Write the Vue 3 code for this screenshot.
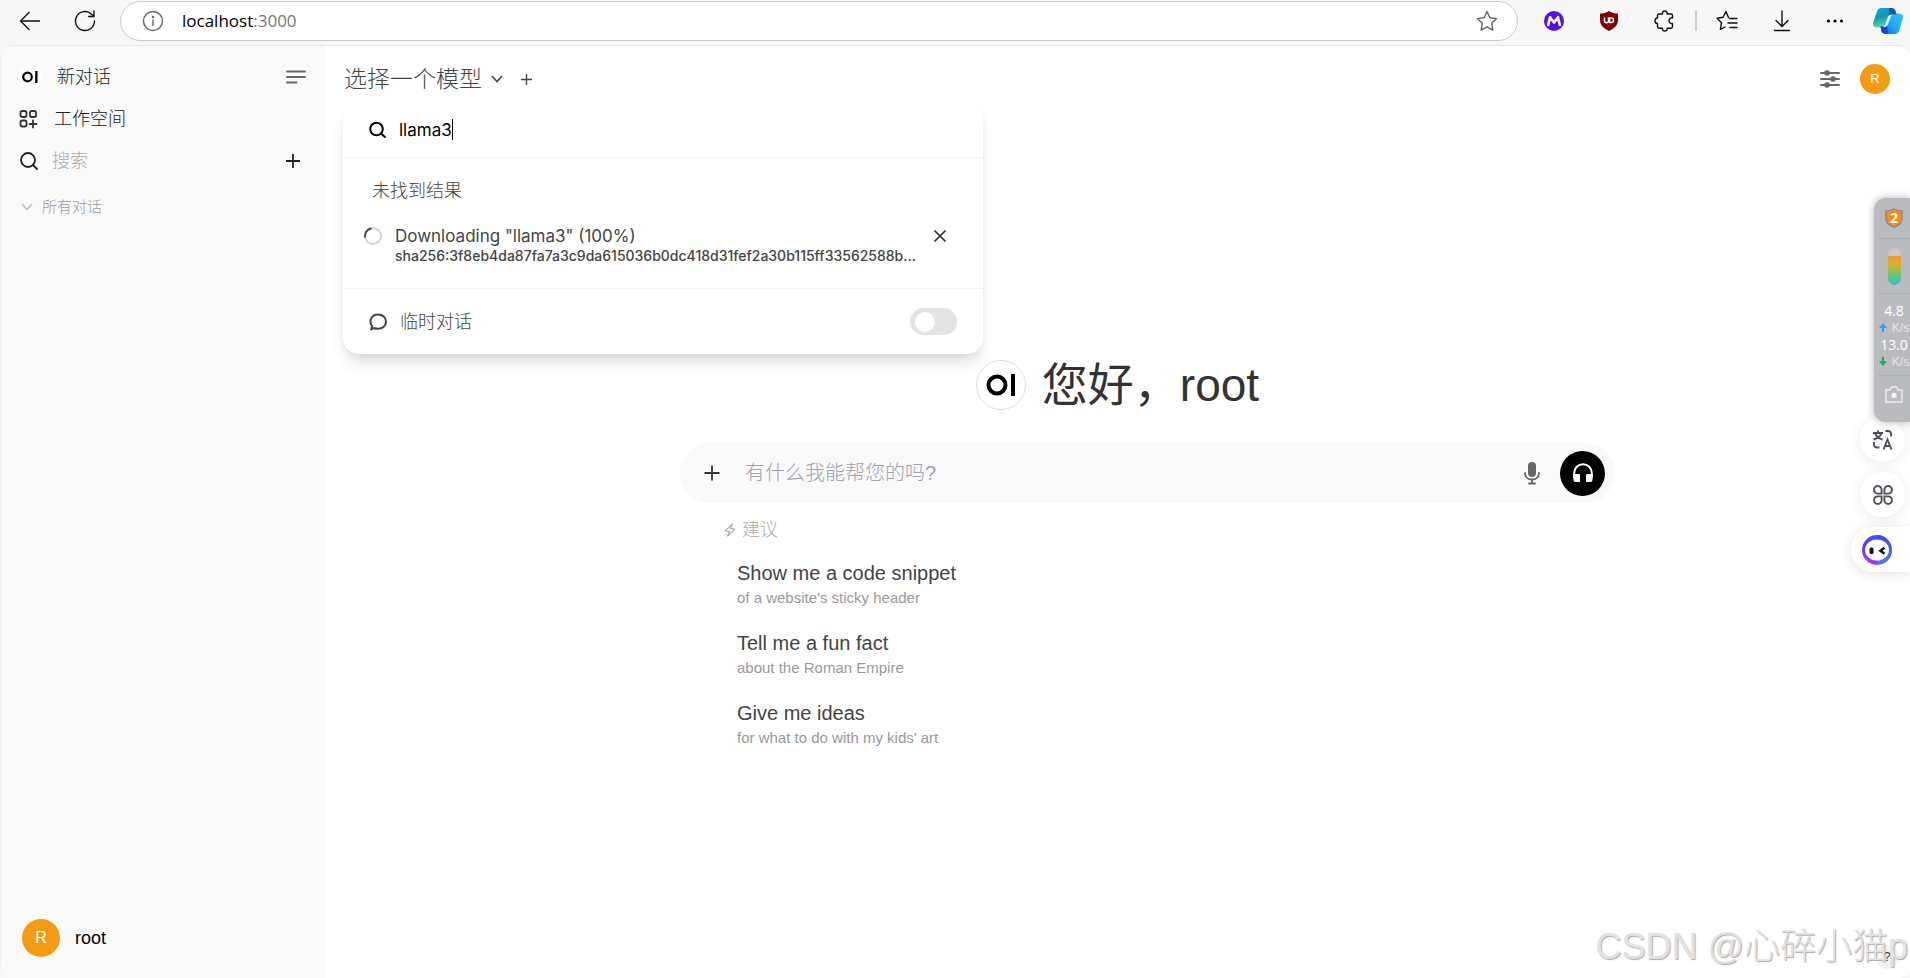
<script setup>
import { ref } from 'vue'

const query = ref('llama3')
const temporary = ref(false)
const message = ref('')
const suggestions = [
  { title: 'Show me a code snippet', detail: "of a website's sticky header" },
  { title: 'Tell me a fun fact', detail: 'about the Roman Empire' },
  { title: 'Give me ideas', detail: "for what to do with my kids' art" },
]
</script>

<template>
  <div class="window">
    <header class="browser">
      <button class="tool" aria-label="Back">
        <svg width="22" height="20" viewBox="0 0 22 20" class="line black"><path d="M20.500 10H1.500M10 1.500 1.500 10l8.500 8.500" /></svg>
      </button>
      <button class="tool reload" aria-label="Reload">
        <svg width="22" height="22" viewBox="0 0 22 22" class="line black"><path d="M20.500 11A9.500 9.500 0 1 1 17.300 3.900L19.500 6M20 1v5.500h-5.500" /></svg>
      </button>
      <div class="address">
        <svg width="22" height="22" viewBox="0 0 22 22" class="line gray"><circle cx="11" cy="11" r="9.500" /><path d="M11 10v5.500" /><circle cx="11" cy="7" r=".6" /></svg>
        <span class="url">localhost<span class="port">:3000</span></span>
        <button class="tool star" aria-label="Favorite">
          <svg width="22" height="22" viewBox="0 0 22 22" class="line gray"><path d="m11 1.500 2.900 6.200 6.700.9-4.900 4.700 1.200 6.800L11 16.900l-5.900 3.200 1.200-6.800L1.400 8.600l6.700-.9z" /></svg>
        </button>
      </div>
      <div class="extensions">
        <button class="tool" aria-label="M extension">
          <svg width="20" height="20" viewBox="0 0 20 20"><circle cx="10" cy="10" r="10" fill="#5410e8" /><path d="M4.200 14 6 6.200l4 5.300 4-5.300 1.800 7.800" fill="none" stroke="#fff" stroke-width="2.600" stroke-linejoin="round" stroke-linecap="round" /></svg>
        </button>
        <button class="tool" aria-label="uBlock">
          <svg width="20" height="20" viewBox="0 0 20 20"><path d="M10 0c3 2 6 2.500 9 2.500V9c0 5.500-4 8.500-9 11-5-2.500-9-5.500-9-11V2.500C4 2.500 7 2 10 0z" fill="#800000" /><path d="M5.500 6.500v3.200a1.700 1.700 0 0 0 4 0V6.500M10.700 11.500h1.500a2.300 2.300 0 0 0 0-4.600h-1.500z" fill="none" stroke="#fff" stroke-width="1.400" /></svg>
        </button>
        <button class="tool" aria-label="Extensions">
          <svg width="22" height="22" viewBox="0 0 22 22" class="line black"><path d="M5 4h3.500c-.3-2 .8-3 2.300-3S13.500 2 13.200 4H17q1.500 0 1.500 1.500V8c-2-.5-3.500.8-3.500 2.700s1.500 3.300 3.500 2.800v3q0 1.700-1.500 1.700h-3.800c.3 2-.8 2.800-2.400 2.800s-2.600-.8-2.300-2.800H5q-1.500 0-1.500-1.700v-3C1.700 13.500 1 12.300 1 10.800S1.700 8 3.500 8V5.500Q3.500 4 5 4z" /></svg>
        </button>
        <i class="separator"></i>
        <button class="tool" aria-label="Favorites list">
          <svg width="22" height="22" viewBox="0 0 22 22" class="line black"><path d="M12.500 7.500 10 1.500 7 7.300l-5.900.9 4.400 4.500-1.100 6.700L9 17M13.500 8.500H21M12 13h9M14 17.500h7" /></svg>
        </button>
        <button class="tool" aria-label="Downloads">
          <svg width="18" height="22" viewBox="0 0 18 22" class="line black"><path d="M9 1v15M3 10.500 9 16.500l6-6M1.500 20.500h15" /></svg>
        </button>
        <button class="tool" aria-label="More">
          <svg width="18" height="6" viewBox="0 0 18 6"><circle cx="2.500" cy="3" r="1.600" /><circle cx="9" cy="3" r="1.600" /><circle cx="15.500" cy="3" r="1.600" /></svg>
        </button>
        <button class="tool copilot" aria-label="Copilot">
          <svg width="30" height="26" viewBox="0 0 32 28">
            <defs>
              <linearGradient id="cpA" x1="0" y1="0" x2=".3" y2="1"><stop offset="0" stop-color="#0aa8d8" /><stop offset=".5" stop-color="#1596b8" /><stop offset="1" stop-color="#5be08f" /></linearGradient>
              <linearGradient id="cpB" x1="1" y1="0" x2="0" y2="1"><stop offset="0" stop-color="#38c4f4" /><stop offset=".6" stop-color="#14a4fb" /><stop offset="1" stop-color="#1652d8" /></linearGradient>
            </defs>
            <path d="M9 0h11q3 0 4 3l1 4h-5q-3 0-4 3l-3 8q-1 3-4 3H4q-5 0-4-5L4 4q1-4 5-4z" fill="url(#cpA)" />
            <path d="M23 28H13q-3 0-4-3l-1-5h4q3 0 4-3l3-8q1-3 4-3h5q5 0 4 5l-4 13q-1 4-5 4z" fill="url(#cpB)" />
            <path d="M17 0h3q3 0 4 3l1 4h-5q-2 0-3 1z" fill="#1554b8" /><path d="M8 20h4q2 0 3-1l1 9h-3q-3 0-4-3z" fill="#1844cf" />
            <path d="M20 7q-3 0-4 3l-3 8q-1 2-2 2.700Q15 21 16 17l3-8q1-3 4-3z" fill="#f4fbff" />
          </svg>
        </button>
      </div>
    </header>

    <div class="page">
      <aside class="sidebar">
        <nav>
          <div class="row">
            <button class="entry new">
              <span class="mini-logo"><svg width="16" height="12" viewBox="0 0 16 12"><circle cx="5.500" cy="6" r="4.300" fill="none" stroke="#000" stroke-width="2.200" /><path d="M13.200 0h2.300v12h-2.300z" /></svg></span>新对话
            </button>
            <button class="icon-button menu" aria-label="收起侧边栏">
              <svg width="20" height="14" viewBox="0 0 20 14"><path d="M1 1.500h18M1 7h18M1 12.500h9.500" stroke="#666" stroke-width="1.800" stroke-linecap="round" /></svg>
            </button>
          </div>
          <div class="row">
            <a class="entry" href="#workspace">
              <svg width="20" height="20" viewBox="0 0 20 20" fill="none" stroke="#333" stroke-width="1.800" stroke-linecap="round"><rect x="1.500" y="2" width="6" height="6" rx="1.700" /><rect x="11" y="2" width="6" height="6" rx="1.700" /><rect x="1.500" y="11.500" width="6" height="6" rx="1.700" /><path d="M14 11.500v7M10.500 15h7" /></svg>工作空间
            </a>
          </div>
          <div class="row">
            <label class="entry find">
              <svg width="20" height="20" viewBox="0 0 20 20" fill="none" stroke="#222" stroke-width="1.800" stroke-linecap="round"><circle cx="9" cy="9" r="7" /><path d="m14.500 14.500 3.500 3.500" /></svg>
              <input type="text" placeholder="搜索" aria-label="搜索" />
            </label>
            <button class="icon-button add" aria-label="新建">
              <svg width="14" height="14" viewBox="0 0 14 14"><path d="M7 0v14M0 7h14" stroke="#222" stroke-width="1.800" /></svg>
            </button>
          </div>
        </nav>
        <button class="folder">
          <svg width="12" height="8" viewBox="0 0 12 8" fill="none" stroke="#bbb" stroke-width="1.500"><path d="m1 1 5 5.500L11 1" /></svg>所有对话
        </button>
        <button class="account"><span class="avatar large">R</span>root</button>
      </aside>

      <main class="main">
        <header class="topbar">
          <div class="model">
            <button class="model-name">选择一个模型
              <svg width="12" height="8" viewBox="0 0 12 8" fill="none" stroke="#444" stroke-width="1.600"><path d="m1 1 5 5.500L11 1" /></svg>
            </button>
            <button class="icon-button" aria-label="添加模型">
              <svg width="11" height="11" viewBox="0 0 11 11"><path d="M5.500 0v11M0 5.500h11" stroke="#444" stroke-width="1.400" /></svg>
            </button>
            <section class="dropdown">
              <label class="search">
                <svg width="18" height="18" viewBox="0 0 18 18" fill="none" stroke="#000" stroke-width="2"><circle cx="7.500" cy="8" r="6.300" /><path d="m12 12.500 4.500 4" /></svg>
                <input v-model="query" type="text" aria-label="搜索模型" /><i class="caret"></i>
              </label>
              <div class="results">
                <p class="none">未找到结果</p>
                <div class="download">
                  <svg class="spinner" width="18" height="18" viewBox="0 0 18 18" fill="none" stroke-width="2"><circle cx="9" cy="9" r="8" stroke="#d4d4d4" /><path d="M1.200 10.500A8 8 0 0 1 7.500 1.200" stroke="#444" /></svg>
                  <div class="status"><p>Downloading "{{ query }}" (100%)</p><small>sha256:3f8eb4da87fa7a3c9da615036b0dc418d31fef2a30b115ff33562588b...</small></div>
                  <button class="icon-button cancel" aria-label="取消">
                    <svg width="12" height="12" viewBox="0 0 12 12"><path d="m.5.5 11 11m0-11-11 11" stroke="#333" stroke-width="1.600" /></svg>
                  </button>
                </div>
              </div>
              <label class="temporary">
                <svg width="18" height="18" viewBox="0 0 18 18" fill="none" stroke="#444" stroke-width="2" stroke-linejoin="round"><path d="M2.300 16.500 3 13C-1 7 3.500 1.500 9 1.500c4.800 0 8 3.200 8 7.200s-3.300 7.100-8 7.100c-1.500 0-3-.3-4-.8z" /></svg>
                <span>临时对话</span>
                <input v-model="temporary" type="checkbox" class="switch" />
              </label>
            </section>
          </div>
          <div class="actions">
            <button class="icon-button" aria-label="设置">
              <svg width="20" height="18" viewBox="0 0 20 18" stroke="#666" stroke-width="2" stroke-linecap="round" fill="#666"><path d="M1 3h18M1 9h18M1 15h18" /><g stroke="none"><circle cx="7" cy="3" r="2.800" /><circle cx="13" cy="9" r="2.800" /><circle cx="7" cy="15" r="2.800" /></g></svg>
            </button>
            <button class="avatar">R</button>
          </div>
        </header>

        <div class="content">
          <h1>
            <span class="logo"><svg width="30" height="22" viewBox="0 0 30 22"><circle cx="11" cy="11" r="8.500" fill="none" stroke="#000" stroke-width="4" /><path d="M25 0h4v22h-4z" /></svg></span>您好，root
          </h1>
          <form class="prompt" @submit.prevent>
            <button type="button" class="icon-button" aria-label="更多">
              <svg width="16" height="16" viewBox="0 0 16 16"><path d="M8 .5v15M.5 8h15" stroke="#333" stroke-width="1.800" /></svg>
            </button>
            <input v-model="message" type="text" placeholder="有什么我能帮您的吗?" aria-label="消息" />
            <button type="button" class="icon-button" aria-label="语音输入">
              <svg width="16" height="24" viewBox="0 0 16 24" fill="none" stroke="#666" stroke-width="1.800" stroke-linecap="round"><rect x="4" y="1" width="8" height="15" rx="4" fill="#666" stroke="none" /><path d="M1 12c0 4 3 6.500 7 6.500s7-2.500 7-6.500M8 18.500v3.500M5 22.500h6" /></svg>
            </button>
            <button type="button" class="call" aria-label="通话">
              <svg width="20" height="20" viewBox="0 0 20 20"><path d="M1.200 15V10a8.800 8.800 0 0 1 17.600 0v5" fill="none" stroke="#fff" stroke-width="2" /><path d="M.5 11H6q1 0 1 1v7H2.500q-2 0-2-2zM19.500 11H14q-1 0-1 1v7h4.500q2 0 2-2z" fill="#fff" /></svg>
            </button>
          </form>
          <section class="suggestions">
            <h2><svg width="12" height="14" viewBox="0 0 12 14" fill="none" stroke="#aaa" stroke-width="1.100" stroke-linejoin="round"><path d="M8.500 1 1 7.800l4.500.8L3.500 13 11 6.200l-4.500-.8z" /></svg>建议</h2>
            <button v-for="item in suggestions" :key="item.title" class="suggestion"><b>{{ item.title }}</b><span>{{ item.detail }}</span></button>
          </section>
        </div>
      </main>
    </div>

    <div class="floating">
      <button class="bubble" aria-label="翻译">
        <svg width="20" height="20" viewBox="0 0 20 20" fill="none" stroke="#50505a" stroke-width="1.900"><path d="M0 3h10M5 .5V3M2 3c1 3.500 4 5.500 7.500 6.500M8.500 3C7.500 6.500 4 8.500.5 9.500M12.500 1H15q3 0 3 3v2.500M1 12v2.500q0 3 3 3h2.500M10.500 19.500l4-10 4 10M12 16h5" /></svg>
      </button>
      <button class="bubble" aria-label="应用">
        <svg width="20" height="20" viewBox="0 0 20 20" fill="none" stroke="#50505a" stroke-width="1.900"><path d="M8.600 8.600H5A3.800 3.800 0 1 1 8.600 5zM11.400 8.600H15A3.800 3.800 0 1 0 11.400 5zM8.600 11.400H5A3.800 3.800 0 1 0 8.600 15zM11.400 11.400H15A3.800 3.800 0 1 1 11.400 15z" /></svg>
      </button>
      <button class="assistant" aria-label="助手">
        <svg width="30" height="30" viewBox="0 0 30 30"><defs><linearGradient id="bot" x1=".2" y1="1" x2=".8" y2="0"><stop offset="0" stop-color="#c23af0" /><stop offset=".4" stop-color="#5a38f5" /><stop offset="1" stop-color="#3b62ff" /></linearGradient><linearGradient id="botRight" x1="0" y1="0" x2="0" y2="1"><stop offset="0" stop-color="#4932ee" /><stop offset="1" stop-color="#3aa5ff" /></linearGradient></defs><circle cx="15" cy="15" r="15" fill="url(#bot)" /><path d="M15 0a15 15 0 0 1 0 30z" fill="url(#botRight)" opacity=".65" /><ellipse cx="15" cy="15" rx="12" ry="10.500" fill="#fff" /><rect x="7.500" y="12.500" width="4" height="6.500" rx="1.500" fill="#15151d" /><path d="m22.500 12.700-4 3 4 3" fill="none" stroke="#15151d" stroke-width="2.600" /></svg>
      </button>
    </div>

    <aside class="monitor">
      <div class="cell shield"><svg width="18" height="20" viewBox="0 0 18 20"><path d="M9 .7c2.500 1.700 5 2.300 8.200 2.300v7.500c0 4.500-3.500 7-8.200 8.800C4.300 17.500.8 15 .8 10.500V3C4 3 6.500 2.400 9 .7z" fill="#ff8c10" stroke="#7b83a8" stroke-width="1.200" /></svg><b>2</b></div>
      <div class="cell gauge"><i></i></div>
      <div class="cell speeds">
        <span>4.8</span><small><svg width="8" height="9" viewBox="0 0 8 9"><path d="m4 0 4 5H5v4H3V5H0z" fill="#17a8ff" /></svg>K/s</small>
        <span>13.0</span><small><svg width="8" height="9" viewBox="0 0 8 9"><path d="m4 9 4-5H5V0H3v4H0z" fill="#0bb75b" /></svg>K/s</small>
      </div>
      <div class="cell camera"><svg width="18" height="17" viewBox="0 0 18 17" fill="none" stroke="#eee" stroke-width="1.300"><path d="M1 4h4l1.500-3h5L13 4h4v12H1z" /><circle cx="9" cy="9.500" r="2" fill="#fff" /></svg></div>
    </aside>

    <button class="help">?</button>
    <div class="watermark">CSDN @心碎小猫p</div>
  </div>
</template>

<style>
body {
  margin: 0;
  background: #f7f7f7;
}
</style>

<style scoped>
* {
  box-sizing: border-box;
}
.window {
  position: relative;
  display: flex;
  flex-direction: column;
  min-height: 100vh;
  overflow: hidden;
  background: #f7f7f7;
  color: #333;
  font-family: "Liberation Sans", "Noto Sans CJK SC", sans-serif;
  font-size: 18px;
  line-height: 24px;
}
button,
input {
  border: 0;
  padding: 0;
  background: none;
  color: inherit;
  font: inherit;
  outline: none;
}
button {
  cursor: pointer;
}
p,
h1,
h2 {
  margin: 0;
  font-weight: 400;
}
svg {
  display: block;
  flex: none;
}
.line {
  fill: none;
  stroke-width: 1.4;
  stroke-linecap: round;
  stroke-linejoin: round;
}
.black {
  stroke: #111;
}
.gray {
  stroke: #666;
}

/* Browser toolbar */
.browser {
  display: flex;
  align-items: center;
  height: 45px;
  padding: 0 7px 4px 19px;
}
.reload {
  margin-left: 33px;
}
.address {
  display: flex;
  flex: 1;
  align-items: center;
  height: 40px;
  margin-left: 24px;
  padding: 0 19px 0 21px;
  border: 1px solid #ccc;
  border-radius: 20px;
  background: #fff;
}
.url {
  flex: 1;
  margin-left: 18px;
  color: #000;
  font-family: "Open Sans", "Noto Sans", sans-serif;
  font-size: 17px;
}
.port {
  color: #777;
}
.extensions {
  display: flex;
  align-items: center;
  gap: 35px;
  margin-left: 26px;
}
.extensions .separator {
  width: 2px;
  height: 20px;
  margin: 0 -16px;
  background: #ccc;
}
.copilot {
  margin-left: -6px;
}

/* Sidebar */
.page {
  display: flex;
  flex: 1;
  border-top: 1px solid #e8e8e8;
  border-radius: 12px;
  overflow: hidden;
  background: #fff;
}
.sidebar {
  display: flex;
  flex: none;
  flex-direction: column;
  width: 325px;
  padding: 10px 19px 21px 18px;
  border-left: 1px solid #eee;
  background: #f9f9f9;
}
.row {
  display: flex;
  align-items: center;
  justify-content: space-between;
  height: 42px;
}
.entry {
  display: flex;
  align-items: center;
  gap: 15px;
  color: #222;
  font-weight: 300;
  text-decoration: none;
}
.mini-logo {
  display: grid;
  place-items: center;
  width: 24px;
  height: 24px;
  margin-left: -1px;
  border-radius: 50%;
  background: #fff;
}
.find {
  gap: 13px;
}
.find input {
  width: 180px;
}
.find input::placeholder {
  color: #aaa;
  opacity: 1;
}
.add {
  margin-right: 6px;
}
.folder {
  display: flex;
  align-items: center;
  gap: 9px;
  margin-top: 13px;
  padding-left: 2px;
  color: #999;
  font-size: 15px;
  font-weight: 300;
}
.account {
  display: flex;
  align-items: center;
  gap: 15px;
  margin-top: auto;
  padding-left: 3px;
  color: #000;
}
.avatar {
  display: grid;
  place-items: center;
  width: 30px;
  height: 30px;
  border-radius: 50%;
  background: #f39c12;
  color: #fff;
  font-size: 13px;
}
.avatar.large {
  width: 38px;
  height: 38px;
  font-size: 16px;
}

/* Main column */
.main {
  flex: 1;
  min-width: 0;
}
.topbar {
  display: flex;
  align-items: center;
  justify-content: space-between;
  height: 66px;
  padding: 0 20px 0 19px;
}
.model {
  position: relative;
  display: flex;
  align-items: center;
  gap: 18px;
}
.model-name {
  display: flex;
  align-items: center;
  gap: 9px;
  color: #444;
  font-size: 23px;
  font-weight: 300;
  line-height: 32px;
}
.actions {
  display: flex;
  align-items: center;
  gap: 20px;
}
.dropdown {
  position: absolute;
  z-index: 2;
  top: 39px;
  left: -1px;
  width: 640px;
  border-radius: 16px;
  background: #fff;
  box-shadow: 0 12px 18px -4px rgba(0, 0, 0, 0.12), 0 4px 8px -3px rgba(0, 0, 0, 0.1);
  color: #444;
  font-family: Inter, "Noto Sans CJK SC", sans-serif;
}
.search {
  display: flex;
  align-items: center;
  height: 56px;
  padding: 0 26px;
  border-bottom: 1px solid #f5f5f5;
}
.search input {
  field-sizing: content;
  margin-left: 12px;
  color: #000;
  font-size: 17px;
}
.caret {
  width: 1px;
  height: 21px;
  background: #000;
}
.results {
  height: 131px;
  padding: 21px 29px 0 21px;
  border-bottom: 1px solid #f5f5f5;
}
.none {
  padding-left: 8px;
  font-weight: 300;
}
.download {
  display: flex;
  margin-top: 21px;
}
.spinner {
  margin-top: 3px;
}
.status {
  flex: 1;
  margin-left: 13px;
  white-space: nowrap;
}
.status p {
  font-size: 17px;
}
.status small {
  display: block;
  font-size: 14px;
  font-weight: 500;
  line-height: 16px;
}
.cancel {
  align-self: flex-start;
  margin: 6px 8px 0 0;
}
.temporary {
  display: flex;
  align-items: center;
  gap: 13px;
  height: 65px;
  padding: 0 26px;
  font-weight: 300;
}
.switch {
  display: flex;
  align-items: center;
  appearance: none;
  width: 47px;
  height: 27px;
  margin: 0 0 0 auto;
  padding: 0 5px;
  border-radius: 14px;
  background: #e3e3e3;
}
.switch::before {
  width: 20px;
  height: 20px;
  border-radius: 50%;
  background: #fff;
  content: "";
}
.switch:checked {
  justify-content: flex-end;
  background: #22c55e;
}
.content {
  max-width: 995px;
  margin: 0 auto;
  padding-top: 243px;
}
h1 {
  display: flex;
  align-items: center;
  justify-content: center;
  gap: 16px;
  color: #333;
  font-size: 46px;
  line-height: 60px;
}
.logo {
  display: grid;
  place-items: center;
  width: 50px;
  height: 50px;
  border: 1px solid #ddd;
  border-radius: 50%;
}
.prompt {
  display: flex;
  align-items: center;
  height: 60px;
  margin: 28px 0 0 60px;
  padding: 0 10px 0 24px;
  border-radius: 30px;
  background: #f9f9f9;
}
.prompt input {
  flex: 1;
  margin-left: 25px;
  font-size: 20px;
  font-weight: 300;
}
.prompt input::placeholder {
  color: #9ca3af;
  opacity: 1;
}
.call {
  display: grid;
  place-items: center;
  width: 45px;
  height: 45px;
  margin-left: 20px;
  border-radius: 50%;
  background: #000;
}
.suggestions {
  display: flex;
  flex-direction: column;
  align-items: flex-start;
  padding: 15px 0 0 104px;
}
h2 {
  display: flex;
  align-items: center;
  gap: 6px;
  margin-bottom: 17px;
  color: #aaa;
  font-size: 18px;
  font-weight: 300;
}
.suggestion {
  display: flex;
  flex-direction: column;
  margin: 0 0 20px 13px;
  text-align: left;
}
.suggestion b {
  color: #444;
  font-size: 20px;
  font-weight: 400;
  line-height: 28px;
}
.suggestion span {
  color: #999;
  font-size: 15px;
  line-height: 22px;
}

/* Widgets over the page */
.floating {
  position: absolute;
  top: 417px;
  right: 0;
  display: flex;
  flex-direction: column;
  align-items: flex-end;
  gap: 10px;
}
.bubble {
  display: grid;
  place-items: center;
  width: 45px;
  height: 45px;
  margin-right: 5px;
  border-radius: 50%;
  background: #fff;
  box-shadow: 0 2px 14px rgba(0, 0, 0, 0.09);
}
.assistant {
  display: flex;
  align-items: center;
  width: 59px;
  height: 45px;
  padding-left: 11px;
  border-radius: 23px 0 0 23px;
  background: #fff;
  box-shadow: 0 2px 14px rgba(0, 0, 0, 0.12);
}
.monitor {
  position: absolute;
  top: 198px;
  right: 0;
  width: 36px;
  height: 224px;
  border-radius: 12px 0 0 12px;
  background: #b9bbbf;
  box-shadow: 0 0 8px rgba(0, 0, 0, 0.3);
  color: #fff;
}
.cell {
  display: grid;
  place-items: center;
  margin-left: 4px;
}
.cell + .cell {
  border-top: 1px solid #a9aeb2;
}
.shield {
  height: 40px;
}
.shield > * {
  grid-area: 1 / 1;
}
.shield b {
  font-family: "Open Sans", sans-serif;
  font-size: 14px;
  line-height: 16px;
}
.gauge {
  height: 55px;
}
.gauge i {
  width: 13px;
  height: 37px;
  border-radius: 7px;
  background: linear-gradient(#c8c8cc 8px, #ee9430 8px, #d6b52c 17px, #5fc878 28px, #35bcc8);
}
.speeds {
  align-content: center;
  height: 82px;
  font-family: "Open Sans", sans-serif;
  font-size: 14px;
  line-height: 20px;
}
.speeds small {
  display: flex;
  align-items: center;
  gap: 5px;
  color: #e4e4e6;
  font-family: "Liberation Sans", sans-serif;
  font-size: 12px;
  line-height: 14px;
}
.camera {
  height: 38px;
}
.help {
  position: absolute;
  right: 11px;
  bottom: 9px;
  width: 24px;
  height: 24px;
  border-radius: 50%;
  background: #f3f3f3;
  color: #333;
  font-size: 13px;
  line-height: 24px;
}
.watermark {
  position: absolute;
  right: 2px;
  bottom: 7px;
  color: #e2e2e2;
  font-size: 36px;
  font-weight: 300;
  line-height: 48px;
  text-shadow: 1px 1px 1px #aaa;
  white-space: nowrap;
  pointer-events: none;
}
</style>
